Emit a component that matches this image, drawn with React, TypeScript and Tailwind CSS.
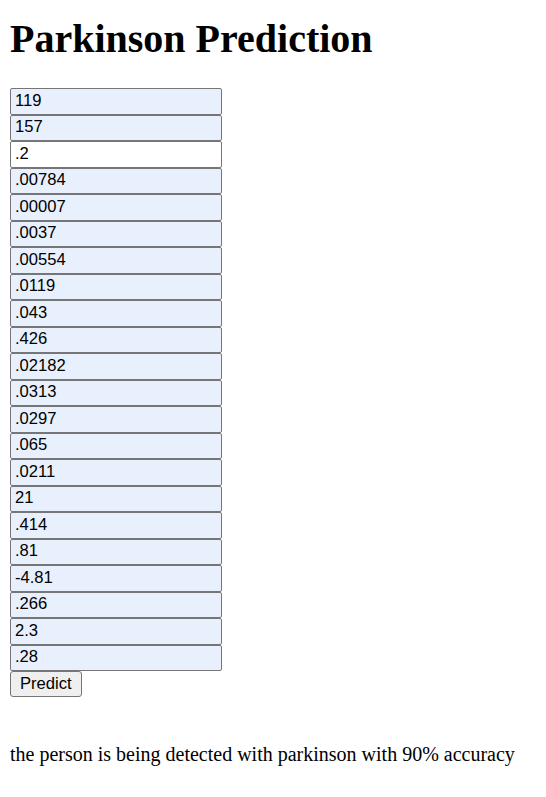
import React from "react";

const VALUES = [
  "119", "157", ".2", ".00784", ".00007", ".0037", ".00554", ".0119", ".043", ".426", ".02182",
  ".0313", ".0297", ".065", ".0211", "21", ".414", ".81", "-4.81", ".266", "2.3", ".28",
];

// the third field was typed by hand, the rest came from autofill
const PLAIN = 2;

export default function App() {
  return (
    <div className="min-h-[797px] bg-white px-[10px] pt-[15.5px] text-black">
      <h1 className="font-['Liberation_Serif',serif] text-[40px] font-bold leading-[46px]">Parkinson Prediction</h1>

      <form className="mt-[26.5px]" onSubmit={(e) => e.preventDefault()}>
        {VALUES.map((v, i) => (
          <input
            key={i}
            type="text"
            defaultValue={v}
            className={`block h-[26.5px] w-[212px] rounded-[2px] border border-[#767676] pb-[1px] pl-[4px] font-['Liberation_Sans',Arial,sans-serif] text-[16.6px] leading-[19px] text-black outline-none ${i === PLAIN ? "bg-white" : "bg-[#e8f0fe]"}`}
          />
        ))}
        <button
          type="submit"
          className="block h-[25.5px] rounded-[3px] border border-[#767676] bg-[#efefef] px-[9px] pb-[1px] font-['Liberation_Sans',Arial,sans-serif] text-[16.6px] leading-[19px] text-black"
        >
          Predict
        </button>
      </form>

      <p className="mt-[46.5px] font-['Liberation_Serif',serif] text-[20px] leading-[23px]">
        the person is being detected with parkinson with 90% accuracy
      </p>
    </div>
  );
}
